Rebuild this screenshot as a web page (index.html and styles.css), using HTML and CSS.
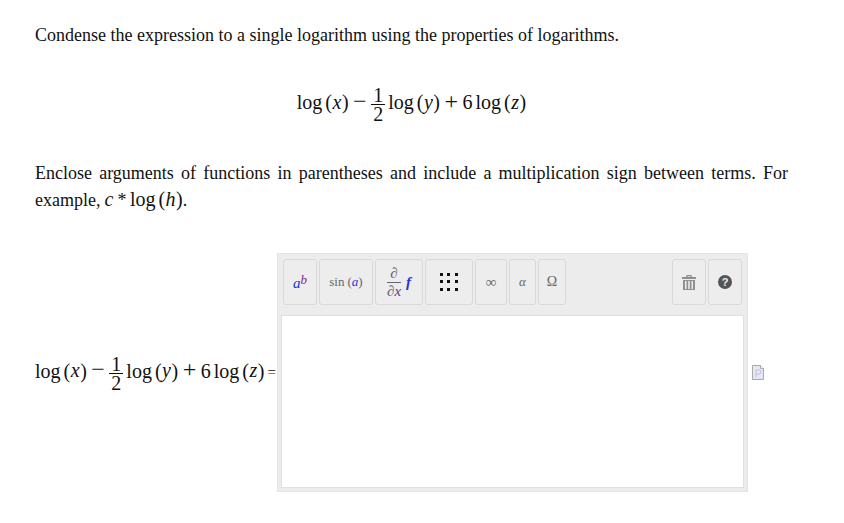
FILE: index.html
```html
<!DOCTYPE html>
<html lang="en">
<head>
    <meta charset="UTF-8">
    <title>Condense the expression</title>
    <link rel="stylesheet" href="styles.css">
</head>
<body>
    <p class="prompt">Condense the expression to a single logarithm using the properties of logarithms.</p>
    <div class="display">
        <span class="math">log<span class="thin"></span>(<i>x</i>)<span class="op">&minus;</span><span class="frac"><span class="num">1</span><span class="den">2</span></span><span class="thin"></span>log<span class="thin"></span>(<i>y</i>)<span class="op">+</span>6<span class="thin"></span>log<span class="thin"></span>(<i>z</i>)</span>
    </div>
    <div class="hint">
        <p class="line-full">Enclose arguments of functions in parentheses and include a multiplication sign between terms. For</p>
        <p class="line-tight"><span>example,</span> <span class="math"><i>c</i></span> <span>*</span> <span class="math">log<span class="thin"></span>(<i>h</i>)</span><span>.</span></p>
    </div>

    <div class="answer">
        <div class="label">
            <span class="math">log<span class="thin"></span>(<i>x</i>)<span class="op">&minus;</span><span class="frac"><span class="num">1</span><span class="den">2</span></span><span class="thin"></span>log<span class="thin"></span>(<i>y</i>)<span class="op">+</span>6<span class="thin"></span>log<span class="thin"></span>(<i>z</i>)</span>
            <span class="equals">=</span>
        </div>
        <div class="editor">
            <div class="toolbar">
                <div class="btn b-pow"><i class="blue">a</i><i class="purple sup">b</i></div>
                <div class="btn b-sin">sin<span class="thin"></span>(<i class="blue">a</i>)</div>
                <div class="btn b-deriv">
                    <span class="frac small"><span class="num">&part;</span><span class="den">&part;<i class="purple">x</i></span></span>
                    <i class="blue f">f</i>
                </div>
                <div class="btn b-matrix">
                    <svg width="18" height="18" viewBox="0 0 18 18" fill="#111">
                        <rect x="0" y="0" width="3" height="3"/><rect x="7" y="0" width="3" height="3"/><rect x="15" y="0" width="3" height="3"/>
                        <rect x="0" y="7" width="3" height="3"/><rect x="7" y="7" width="3" height="3"/><rect x="15" y="7" width="3" height="3"/>
                        <rect x="0" y="15" width="3" height="3"/><rect x="7" y="15" width="3" height="3"/><rect x="15" y="15" width="3" height="3"/>
                    </svg>
                </div>
                <div class="btn b-inf">&infin;</div>
                <div class="btn b-alpha"><i>&alpha;</i></div>
                <div class="btn b-omega">&Omega;</div>
                <div class="spacer"></div>
                <div class="btn b-icon">
                    <svg width="14" height="15" viewBox="0 0 14 15" fill="#8f8f8f">
                        <rect x="0" y="2" width="14" height="2"/>
                        <path d="M4 2.500V1l1-1h4l1 1v1.500H8.500V1.200h-3v1.300z"/>
                        <path d="M1 5h12v10H1z M3 6v8h1.500V6z M6.200 6v8h1.600V6z M9.500 6v8H11V6z" fill-rule="evenodd"/>
                    </svg>
                </div>
                <div class="btn b-icon">
                    <span class="help">?</span>
                </div>
            </div>
            <div class="input"></div>
        </div>
        <svg class="file" width="12" height="15" viewBox="0 0 12 15">
            <path d="M.5.5h8l3 3v11H.5z" fill="#e6e7f6" stroke="#a9a9a9"/>
            <path d="M8.500.5v3h3" fill="#fff" stroke="#a9a9a9"/>
            <path d="M4 12V5h3a2 2 0 0 1 0 4H4" fill="none" stroke="#bfc2d8"/>
        </svg>
    </div>
</body>
</html>
```

FILE: styles.css
```css
body {
    margin: 0;
    padding: 0 56px 0 35px;
    font-family: "Liberation Serif", "DejaVu Serif", serif;
    font-size: 18px;
    color: #111;
    background: #fff;
}
p {
    margin: 0;
}
.prompt {
    padding-top: 24px;
    line-height: 22px;
}
.display {
    margin-top: 38px;
    height: 40px;
    display: flex;
    align-items: center;
    justify-content: center;
}
.hint {
    margin-top: 36px;
    line-height: 26px;
}
.line-full {
    text-align: justify;
    text-align-last: justify;
}
.line-tight {
    word-spacing: -1px;
}
.math {
    white-space: nowrap;
    font-size: 20px;
}
.math i {
    padding: 0 .5px;
}
.thin {
    display: inline-block;
    width: 3px;
}
.op {
    margin: 0 4.5px;
    font-size: 24px;
    line-height: 1;
}
.frac {
    display: inline-flex;
    flex-direction: column;
    align-items: center;
    vertical-align: middle;
    line-height: 18px;
    margin-top: 1px;
}
.frac .num {
    border-bottom: 1px solid #111;
    padding: 0 2px;
}
.answer {
    margin-top: 40px;
    display: flex;
    align-items: center;
    margin-right: -40px;
}
.label {
    width: 242px;
    flex: none;
    display: flex;
    justify-content: space-between;
    align-items: center;
}
.equals {
    font-size: 15px;
    margin-right: 1px;
}
.editor {
    width: 471px;
    flex: none;
    background: #ececec;
    border: 1px solid #e4e4e4;
    box-sizing: border-box;
    padding: 0 3px 3px;
}
.toolbar {
    display: flex;
    gap: 2px;
    height: 61px;
    padding: 5px 2px 0;
    box-sizing: border-box;
}
.btn {
    height: 46px;
    box-sizing: border-box;
    border: 1px solid #d9d9d9;
    border-radius: 3px;
    background: #ededed;
    display: flex;
    align-items: center;
    justify-content: center;
    color: #666;
    font-size: 13px;
}
.b-pow { width: 34px; font-size: 15px; padding-top: 3px; }
.b-sin { width: 54px; }
.b-deriv { width: 48px; gap: 5px; }
.b-matrix { width: 48px; }
.b-inf { width: 32px; font-size: 15px; }
.b-alpha { width: 27px; }
.b-omega { width: 28px; font-size: 14px; color: #6a6a6a; }
.b-icon { width: 34px; }
.spacer { flex: 1; }
.blue { color: #2233dd; }
.purple { color: #7a2a8a; }
.f {
    font-size: 15px;
    font-weight: 700;
}
.sup {
    font-size: 13px;
    line-height: 1;
    margin-bottom: 9px;
}
.small {
    font-size: 15px;
    line-height: 17px;
    margin: 0;
}
.small .num {
    border-color: #666;
    padding: 0 2px;
    width: 100%;
    text-align: center;
    box-sizing: border-box;
}
.help {
    width: 14px;
    height: 14px;
    border-radius: 50%;
    background: #555;
    color: #eee;
    font: 700 11px/14px "Liberation Sans", sans-serif;
    text-align: center;
}
.input {
    height: 173px;
    background: #fff;
    border: 1px solid #e0e0e0;
    box-sizing: border-box;
}
.file {
    margin-left: 4px;
    flex: none;
}
```
